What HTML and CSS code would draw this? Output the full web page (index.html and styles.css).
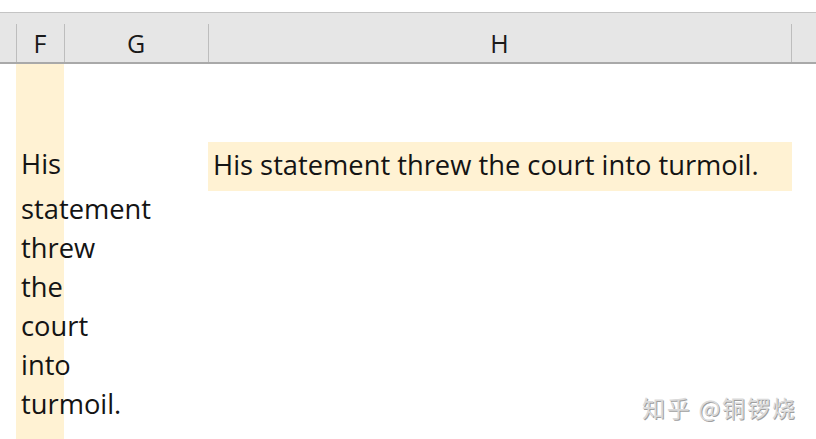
FILE: index.html
```html
<!DOCTYPE html>
<html>
<head>
<meta charset="utf-8">
<link rel="stylesheet" href="styles.css">
</head>
<body>
<div class="sheet">
  <div class="topgap"></div>
  <div class="header">
    <div class="hcell corner"></div>
    <div class="hcell col-f">F</div>
    <div class="hcell col-g">G</div>
    <div class="hcell col-h">H</div>
    <div class="hcell rest"></div>
  </div>
  <div class="body">
    <div class="bcell corner"></div>
    <div class="bcell col-f fcell">
      <div class="wrap">
        <div class="w first">His</div>
        <div class="w">statement</div>
        <div class="w">threw</div>
        <div class="w">the</div>
        <div class="w">court</div>
        <div class="w">into</div>
        <div class="w">turmoil.</div>
      </div>
    </div>
    <div class="bcell col-g"></div>
    <div class="bcell col-h">
      <div class="hline">His statement threw the court into turmoil.</div>
    </div>
  </div>
  <div class="watermark">知乎 @铜锣烧</div>
</div>
</body>
</html>
```

FILE: styles.css
```css
html, body {
  margin: 0;
  padding: 0;
  background: #ffffff;
}
.sheet {
  position: relative;
  width: 816px;
  height: 439px;
  overflow: hidden;
  font-family: "Open Sans", "Noto Sans", "Noto Sans CJK SC", sans-serif;
  color: #141414;
}
.topgap {
  height: 12px;
}
.header {
  display: flex;
  height: 49px;
  background: #e6e6e6;
  border-top: 1px solid #c4c4c4;
  border-bottom: 2px solid #a9a9a9;
}
.hcell {
  position: relative;
  display: flex;
  align-items: center;
  justify-content: center;
  font-size: 25px;
  padding-top: 10px;
  box-sizing: border-box;
  color: #1a1a1a;
}
.hcell::before {
  content: "";
  position: absolute;
  left: 0;
  top: 11px;
  bottom: 0;
  width: 1px;
  background: #bdbdbd;
}
.hcell.corner::before { display: none; }
.corner { width: 16px; flex: none; }
.col-f { width: 48px; flex: none; }
.col-g { width: 144px; flex: none; }
.col-h { width: 583px; flex: none; }
.rest { flex: 1; }

.body {
  display: flex;
  height: 376px;
}
.bcell {
  position: relative;
}
.fcell {
  background: #fff2d3;
}
.wrap {
  position: absolute;
  left: 5px;
  top: 81px;
  font-size: 27.3px;
  white-space: nowrap;
}
.w {
  height: 39px;
  line-height: 39px;
}
.w.first {
  height: 44px;
  line-height: 38px;
}
.col-h.bcell {
  padding-top: 78px;
  box-sizing: border-box;
}
.hline {
  background: #fff2d3;
  height: 49px;
  line-height: 46px;
  font-size: 27.3px;
  padding-left: 5px;
  width: 584px;
  box-sizing: border-box;
  white-space: nowrap;
}
.watermark {
  position: absolute;
  left: 642px;
  top: 390px;
  font-family: "Noto Sans CJK SC", sans-serif;
  font-size: 23px;
  color: #dadada;
  text-shadow: 1px 1px 0 #a0a0a0;
  letter-spacing: 1.8px;
}
```
